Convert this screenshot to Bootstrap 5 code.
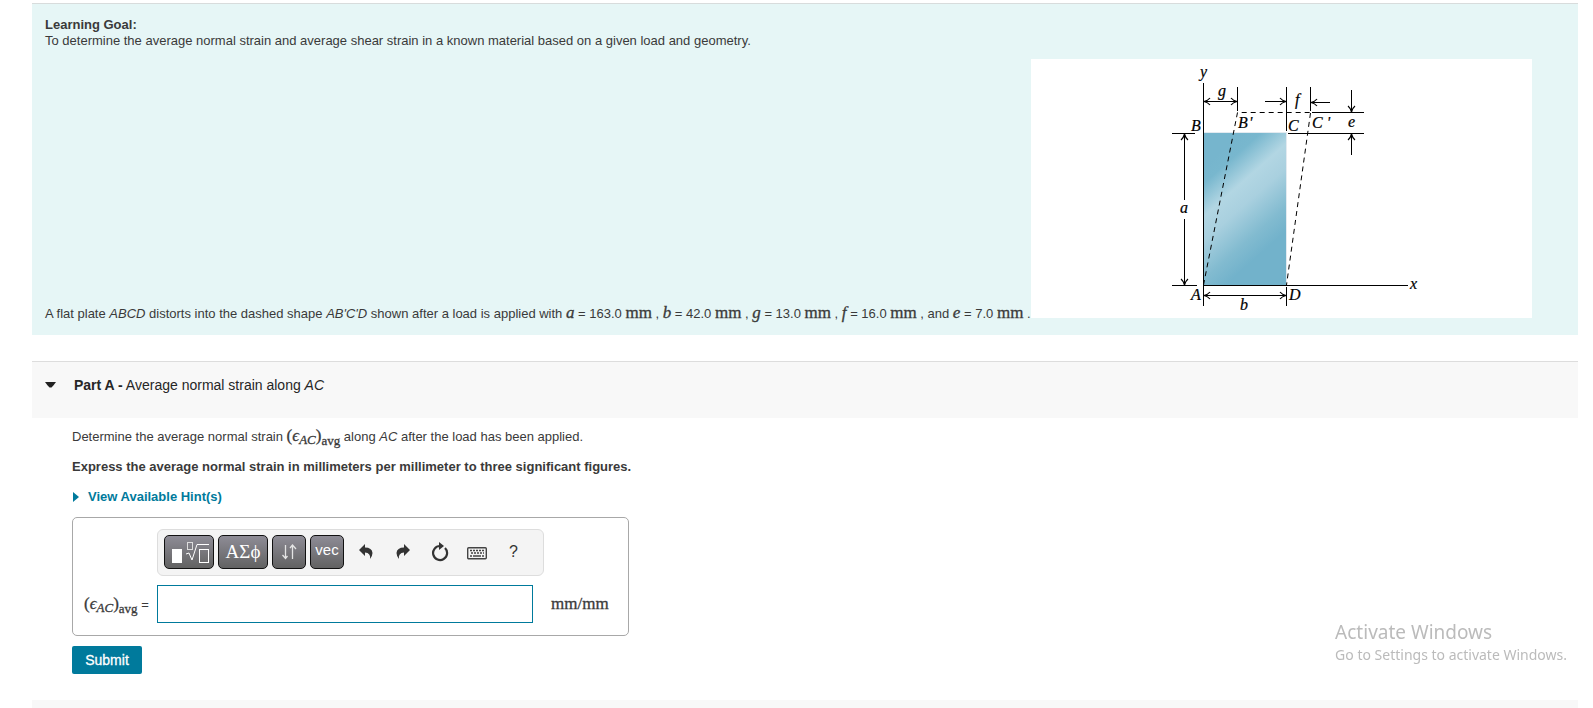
<!DOCTYPE html>
<html lang="en">
<head>
<meta charset="utf-8">
<meta name="viewport" content="width=device-width, initial-scale=1">
<title>Average normal strain</title>
<link href="https://cdn.jsdelivr.net/npm/bootstrap@5.3.0/dist/css/bootstrap.min.css" rel="stylesheet">
<style>
  body { font: 13px/16px "Liberation Sans", Arial, sans-serif; color: #3a3a3a; background: #fff; overflow-x: hidden; }
  .page { padding: 3px 15px 0 32px; }
  .goal { background: #e6f6f6; border-top: 1px solid #d8dcdc; padding: 13px 13px; }
  .goal p { margin: 0; }
  .figure-line { padding-top: 10px; }
  .figure-line svg { width: 501px; max-width: 100%; height: auto; background: #fff; vertical-align: baseline; }
  .math { font-family: "Liberation Serif", "Times New Roman", serif; font-size: 17px; line-height: 16px; white-space: nowrap; -webkit-text-stroke: 0.3px currentColor; }
  .math sub { font-size: 13px; line-height: 0; bottom: -3px; }
  .math sub.avg { bottom: -4px; }
  .part-head { margin-top: 26px; height: 57px; padding: 0 13px; background: #f8f8f8; border-top: 1px solid #ddd; }
  .part-toggle { border: 0; background: none; padding: 15px 0 0; font-size: 14px; color: #262626; text-align: left; gap: 17px; }
  .part-body { padding: 10px 0 26px 40px; }
  .part-body p { margin-bottom: 14px; }
  .hint { color: #007a9c; text-decoration: none; font-weight: 700; gap: 9px; }
  .answer { width: 557px; max-width: 100%; margin-top: 11px; padding: 11px 12px 12px 11px; border: 1px solid #a8a8a8; border-radius: 5px; }
  .answer-grid { display: grid; grid-template-columns: 73px minmax(0, 1fr) 83px; row-gap: 9px; align-items: center; }
  .tools { grid-column: 2 / 4; justify-self: start; height: 47px; width: 387px; max-width: 100%; padding: 0 6px 2px; background: #f4f4f4; border: 1px solid #ddd; border-radius: 6px; }
  .key { width: 34px; height: 34px; padding: 0; margin-right: 4px; color: #fff; border: 1px solid #111; border-radius: 5px; background: linear-gradient(#8e8c96, #626262); }
  .key.wide { width: 50px; }
  .key.word { font-size: 15px; margin-right: 3px; padding-bottom: 4px; }
  .greek { font: 19px/20px "Liberation Serif", serif; }
  .tool { width: 37px; height: 34px; padding: 0; border: 0; background: none; color: #333; }
  .field { height: 38px; border: 1px solid #007a9c; border-radius: 0; background: #fff; padding: 4px 8px; width: 100%; }
  .unit { padding-left: 18px; }
  .submit { margin-top: 10px; height: 28px; width: 70px; padding: 0; border: 0; border-radius: 2px; background: #007a9c; color: #fff; font-size: 14px; -webkit-text-stroke: 0.3px #fff; }
  .next-part { height: 58px; background: #f8f8f8; }
  .clip { height: 100vh; overflow: hidden; }
  .watermark { right: 26px; bottom: 43px; color: #bbb; font-family: "Noto Sans", "Open Sans", sans-serif; font-size: 14px; line-height: 20px; pointer-events: none; }
  .watermark strong { display: block; font-weight: 400; font-size: 19px; line-height: 25px; }
</style>
</head>
<body>
<div class="clip">
<main class="page">
  <section class="goal">
    <p><strong>Learning Goal:</strong></p>
    <p>To determine the average normal strain and average shear strain in a known material based on a given load and geometry.</p>
    <p class="figure-line">A flat plate <i>ABCD</i> distorts into the dashed shape <i>AB'C'D</i> shown after a load is applied with <i class="math">a</i> = 163.0 <span class="math">mm</span> , <i class="math">b</i> = 42.0 <span class="math">mm</span> , <i class="math">g</i> = 13.0 <span class="math">mm</span> , <i class="math">f</i> = 16.0 <span class="math">mm</span> , and <i class="math">e</i> = 7.0 <span class="math">mm</span> .<svg viewBox="0 0 501 259" role="img" aria-label="Plate ABCD with its distorted shape">
      <defs>
        <linearGradient id="sheen" gradientUnits="userSpaceOnUse" x1="176" y1="105" x2="244" y2="182">
          <stop offset="0" stop-color="#76b5cd"/><stop offset=".12" stop-color="#78b7ce"/><stop offset=".36" stop-color="#b2d6e3"/><stop offset=".54" stop-color="#a9d0df"/><stop offset=".82" stop-color="#82bbd0"/><stop offset="1" stop-color="#72b2cb"/>
        </linearGradient>
        <path id="head" d="M-6-3.5Q-4-1 0 0Q-4 1-6 3.5" fill="none" stroke="#000" stroke-width="1.2"/>
      </defs>
      <rect x="172" y="73" width="84" height="153" fill="#e3eaf0"/>
      <rect x="172" y="74" width="83" height="152" fill="url(#sheen)"/>
      <g stroke="#000" fill="none">
        <path d="M172.500 24V247M172 226.500H377M141 226.500H166M141 74.500H164M255.500 28V72M255.500 228V247M206.500 28V52M279.500 28V52M281 53.500H333M257 74.500H333M320.500 31V53M320.500 75V96M153.500 75V141M153.500 160V226M173 42.500H206M234 42.500H255M280 43.500H299M173 236.500H255"/>
        <path stroke-dasharray="5 4" d="M172.500 226L206.500 53.500H279.500M279.500 54L255.500 226"/>
      </g>
      <use href="#head" transform="translate(206 42.500)"/><use href="#head" transform="translate(173 42.500) rotate(180)"/>
      <use href="#head" transform="translate(255 42.500)"/><use href="#head" transform="translate(280 43.500) rotate(180)"/>
      <use href="#head" transform="translate(255 236.500)"/><use href="#head" transform="translate(173 236.500) rotate(180)"/>
      <use href="#head" transform="translate(320.500 53) rotate(90)"/><use href="#head" transform="translate(320.500 75) rotate(-90)"/>
      <use href="#head" transform="translate(153.500 226) rotate(90)"/><use href="#head" transform="translate(153.500 75) rotate(-90)"/>
      <g font-family="Liberation Serif, serif" font-style="italic" font-size="16" fill="#000" stroke="#000" stroke-width=".2">
        <text x="169" y="18">y</text><text x="187" y="37">g</text><text x="264" y="46">f</text>
        <text x="160" y="72">B</text><text x="207" y="69">B&#8202;'</text><text x="257" y="72">C</text><text x="281" y="69">C '</text>
        <text x="317" y="68">e</text><text x="149" y="154">a</text><text x="160" y="241">A</text><text x="258" y="241">D</text>
        <text x="209" y="251">b</text><text x="379" y="230">x</text>
      </g>
    </svg></p>
  </section>

  <section>
    <div class="part-head">
      <button type="button" class="part-toggle d-flex align-items-center" aria-expanded="true">
        <svg width="12" height="6" viewBox="0 0 12 6" class="flex-shrink-0" aria-hidden="true"><path d="M0 0H11Q9 3 6.500 5.500H4.500Q2 3 0 0Z" fill="#222"/></svg>
        <span><strong>Part A -</strong> Average normal strain along <i>AC</i></span>
      </button>
    </div>
    <div class="part-body">
      <p>Determine the average normal strain <span class="math">(<i>ϵ</i><sub><i>AC</i></sub>)<sub class="avg">avg</sub></span> along <i>AC</i> after the load has been applied.</p>
      <p><strong>Express the average normal strain in millimeters per millimeter to three significant figures.</strong></p>
      <a href="#" class="hint d-inline-flex align-items-center"><svg width="7" height="10" viewBox="0 0 7 10" aria-hidden="true"><path d="M1 0L7 5L1 10Z" fill="#007a9c"/></svg>View Available Hint(s)</a>

      <form onsubmit="return false">
        <div class="answer">
          <div class="answer-grid">
            <div class="tools d-flex align-items-center" role="toolbar" aria-label="Equation tools">
              <button type="button" class="key wide" aria-label="Templates">
                <svg width="40" height="26" viewBox="0 0 40 26" fill="none" stroke="#fff" aria-hidden="true"><rect x="3" y="10" width="10" height="14" fill="#fff" stroke="none"/><rect x="18.500" y="3.500" width="5" height="7" stroke="#ddd"/><path d="M17 15L20 14L23 21L28 5.500H40"/><rect x="30.500" y="10.500" width="9" height="13"/></svg>
              </button>
              <button type="button" class="key wide greek">ΑΣϕ</button>
              <button type="button" class="key" aria-label="Arrows">
                <svg width="16" height="18" viewBox="0 0 16 18" fill="none" stroke="#e4e4e4" stroke-width="1.300" aria-hidden="true"><path d="M4.500 2V15M1.500 12L4.500 15.500L6.500 13M11.500 16V3M9 5L11.500 2L15 6"/></svg>
              </button>
              <button type="button" class="key word">vec</button>
              <button type="button" class="tool" aria-label="Undo">
                <svg width="16" height="18" viewBox="0 0 16 18" aria-hidden="true"><path d="M1 7L7 1V4.500Q14 4.500 14.500 10Q14.500 13 12 16Q13 10 7 9.500V13Z" fill="#333"/></svg>
              </button>
              <button type="button" class="tool" aria-label="Redo">
                <svg width="16" height="18" viewBox="0 0 16 18" aria-hidden="true"><path d="M15 7L9 1V4.500Q2 4.500 1.500 10Q1.500 13 4 16Q3 10 9 9.500V13Z" fill="#333"/></svg>
              </button>
              <button type="button" class="tool" aria-label="Reset">
                <svg width="18" height="20" viewBox="0 0 18 20" fill="none" aria-hidden="true"><path d="M14 6A7 7 0 1 1 9 4" stroke="#333" stroke-width="2.200"/><path d="M8 0L13 4L8 8Z" fill="#333"/></svg>
              </button>
              <button type="button" class="tool" aria-label="Keyboard">
                <svg width="20" height="16" viewBox="0 0 20 16" fill="none" stroke="#444" aria-hidden="true"><rect x=".7" y="3.700" width="18.600" height="11" rx="1" stroke-width="1.400"/><path d="M3 6.500H17M4 9H17" stroke-width="1.500" stroke-dasharray="2 1"/><path d="M3 12H5M6 12H14M15 12H17" stroke-width="1.500"/></svg>
              </button>
              <button type="button" class="tool fs-6" aria-label="Help">?</button>
            </div>
            <label for="strain" class="text-nowrap"><span class="math">(<i>ϵ</i><sub><i>AC</i></sub>)<sub class="avg">avg</sub></span> =</label>
            <input id="strain" type="text" class="field" autocomplete="off">
            <span class="math unit">mm/mm</span>
          </div>
        </div>
        <button type="submit" class="submit">Submit</button>
      </form>
    </div>
  </section>
  <div class="next-part"></div>
</main>
</div>
<aside class="watermark position-fixed"><strong>Activate Windows</strong>Go to Settings to activate Windows.</aside>
<script src="https://cdn.jsdelivr.net/npm/bootstrap@5.3.0/dist/js/bootstrap.bundle.min.js"></script>
</body>
</html>
